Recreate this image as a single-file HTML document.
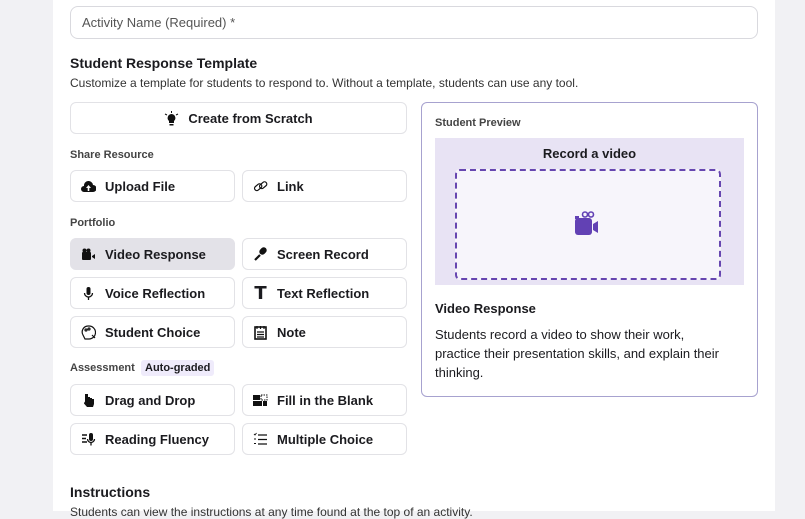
<!DOCTYPE html>
<html><head><style>
*{box-sizing:border-box;margin:0;padding:0}
body{width:805px;height:511px;overflow:hidden;background:#f1f1f4;font-family:"Liberation Sans",sans-serif;color:#1b1b1f;position:relative}
.main{position:absolute;left:53px;top:0;width:722px;height:511px;background:#fff}
.a{position:absolute}
.inp{left:70px;top:6px;width:688px;height:33px;border:1px solid #d9d9de;border-radius:8px;padding:8px 11px;font-size:13px;color:#555}
.btn{position:absolute;height:32px;border:1px solid #e2e2e6;border-radius:6px;background:#fff;font-size:13px;font-weight:bold;display:flex;align-items:center;padding-left:10px;gap:9px;width:165px}
.btn.sel{background:#e3e2e8;border-color:#e3e2e8}
.ic{width:15px;height:15px;display:flex;align-items:center;justify-content:center;font-size:13px}
.lbl{position:absolute;font-size:11px;color:#444;font-weight:bold}
</style></head><body>
<div class="main"></div>
<div class="a inp">Activity Name (Required) *</div>
<div class="a" style="left:70px;top:55px;font-size:14px;font-weight:bold">Student Response Template</div>
<div class="a" style="left:70px;top:76px;font-size:12px;color:#333">Customize a template for students to respond to. Without a template, students can use any tool.</div>
<div class="btn" style="left:70px;top:102px;width:337px;justify-content:center;padding-left:0"><span class="ic"><svg width="15" height="15" viewBox="0 0 15 15"><path d="M1 3l2 1M14 3l-2 1M7.5 0v2" stroke="#111" stroke-width="1"/><path d="M7.5 3a4 4 0 00-2.5 7v2h5v-2a4 4 0 00-2.5-7z" fill="#111"/><rect x="5.5" y="13" width="4" height="1.5" fill="#111"/></svg></span>Create from Scratch</div>
<div class="lbl" style="left:70px;top:149px">Share Resource</div>
<div class="btn" style="left:70px;top:170px"><span class="ic"><svg width="15" height="13" viewBox="0 0 15 13"><path d="M4 12H3a3 3 0 010-6 4.5 4.5 0 019-1 3 3 0 010 7h-1z" fill="#111"/><path d="M7.5 5l-2.5 3h1.7v3h1.6v-3H10z" fill="#fff"/></svg></span>Upload File</div>
<div class="btn" style="left:242px;top:170px"><span class="ic"><svg width="15" height="15" viewBox="0 0 15 15" fill="none" stroke="#111" stroke-width="1.2"><rect x="1" y="6" width="8" height="4.5" rx="2.2" transform="rotate(-40 5 8)"/><rect x="6" y="4" width="8" height="4.5" rx="2.2" transform="rotate(-40 10 6)"/></svg></span>Link</div>
<div class="lbl" style="left:70px;top:217px">Portfolio</div>
<div class="btn sel" style="left:70px;top:238px"><span class="ic"><svg width="15" height="13" viewBox="0 0 15 13"><circle cx="3.5" cy="2.5" r="2" fill="#111"/><circle cx="7.5" cy="2.5" r="2" fill="#111"/><rect x="1" y="4" width="9" height="8" rx="1" fill="#111"/><path d="M11 8l3-2v5l-3-2z" fill="#111"/></svg></span>Video Response</div>
<div class="btn" style="left:242px;top:238px"><span class="ic"><svg width="15" height="15" viewBox="0 0 15 15"><rect x="7" y="0" width="6" height="8" rx="3" transform="rotate(45 10 4)" fill="#111"/><path d="M7 8L2 13" stroke="#111" stroke-width="2.2"/></svg></span>Screen Record</div>
<div class="btn" style="left:70px;top:277px"><span class="ic"><svg width="15" height="15" viewBox="0 0 15 15"><rect x="5.5" y="1" width="4" height="8" rx="2" fill="#111"/><path d="M3.5 7a4 4 0 008 0M7.5 11v3" stroke="#111" stroke-width="1.3" fill="none"/></svg></span>Voice Reflection</div>
<div class="btn" style="left:242px;top:277px"><span class="ic" style="font-size:18px;font-family:'DejaVu Sans'">T</span>Text Reflection</div>
<div class="btn" style="left:70px;top:316px"><span class="ic"><svg width="15" height="15" viewBox="0 0 15 15" fill="none" stroke="#111" stroke-width="1.2"><path d="M7 1a6 6 0 00-5 9l2 4h4a6 6 0 000-13z"/><circle cx="5" cy="5" r="1"/><circle cx="8" cy="4" r="1"/><path d="M11 10l3 3"/></svg></span>Student Choice</div>
<div class="btn" style="left:242px;top:316px"><span class="ic"><svg width="13" height="15" viewBox="0 0 13 15"><rect x="1" y="2" width="11" height="12" fill="none" stroke="#111" stroke-width="1.6"/><path d="M3 1v3M6.5 1v3M10 1v3M3 7h7M3 9.5h7M3 12h7" stroke="#111" stroke-width="1.2"/></svg></span>Note</div>
<div class="lbl" style="left:70px;top:362px">Assessment</div>
<div class="a" style="left:141px;top:360px;background:#efebfb;border-radius:3px;padding:2px 4px;font-size:11px;font-weight:bold">Auto-graded</div>
<div class="btn" style="left:70px;top:384px"><span class="ic"><svg width="13" height="15" viewBox="0 0 13 15"><path d="M3 1v9l-1-1.5v2l3 3.5h6l1-3v-5l-2 0v-1l-2 0v-1l-2 0V1z" fill="#111"/></svg></span>Drag and Drop</div>
<div class="btn" style="left:242px;top:384px"><span class="ic"><svg width="15" height="13" viewBox="0 0 15 13"><rect x="0" y="1" width="7" height="5" fill="#111"/><rect x="8" y="1" width="6" height="5" fill="none" stroke="#111" stroke-dasharray="1.5 1"/><rect x="0" y="7" width="9" height="5" fill="#111"/><rect x="10" y="7" width="4" height="5" fill="#111"/></svg></span>Fill in the Blank</div>
<div class="btn" style="left:70px;top:423px"><span class="ic"><svg width="15" height="15" viewBox="0 0 15 15"><path d="M1 3h5M1 6.5h4M1 10h5" stroke="#111" stroke-width="1.5"/><rect x="8" y="1" width="4" height="8" rx="2" fill="#111"/><path d="M6.5 7a3.5 3.5 0 007 0M10 10.5v3" stroke="#111" stroke-width="1.3" fill="none"/></svg></span>Reading Fluency</div>
<div class="btn" style="left:242px;top:423px"><span class="ic"><svg width="15" height="15" viewBox="0 0 15 15"><path d="M5 3h9M5 7.5h9M5 12h9" stroke="#111" stroke-width="1.2"/><path d="M1 2l1 1 1.5-2M1 7h2M1 11.5h2" stroke="#111" stroke-width="0.9" fill="none"/></svg></span>Multiple Choice</div>
<div class="a" style="left:70px;top:484px;font-size:14px;font-weight:bold">Instructions</div>
<div class="a" style="left:70px;top:505px;font-size:12px;color:#333">Students can view the instructions at any time found at the top of an activity.</div>

<div class="a" style="left:421px;top:102px;width:337px;height:295px;border:1px solid #a7a2cf;border-radius:6px"></div>
<div class="a" style="left:435px;top:117px;font-size:11px;font-weight:bold;color:#444">Student Preview</div>
<div class="a" style="left:435px;top:138px;width:309px;height:147px;background:#e8e3f4"></div>
<div class="a" style="left:435px;top:146px;width:309px;text-align:center;font-size:13px;font-weight:bold">Record a video</div>
<div class="a" style="left:455px;top:169px;width:266px;height:111px;border:2px dashed #6746b0;border-radius:5px;background:#f7f5fb"></div>
<svg class="a" style="left:575px;top:211px" width="26" height="25" viewBox="0 0 26 25"><circle cx="10" cy="3.5" r="2.5" fill="none" stroke="#6241b4" stroke-width="1.6"/><circle cx="16" cy="3.5" r="2.5" fill="none" stroke="#6241b4" stroke-width="1.6"/><rect x="0" y="7" width="17" height="17" rx="3" fill="#6241b4"/><path d="M18 13l5-3v12l-5-3z" fill="#6241b4"/><rect x="0" y="5" width="4" height="3" fill="#6241b4"/></svg>
<div class="a" style="left:435px;top:301px;font-size:13px;font-weight:bold">Video Response</div>
<div class="a" style="left:435px;top:325px;width:320px;font-size:13px;line-height:19px;white-space:nowrap">Students record a video to show their work,<br>practice their presentation skills, and explain their<br>thinking.</div>
</body></html>
